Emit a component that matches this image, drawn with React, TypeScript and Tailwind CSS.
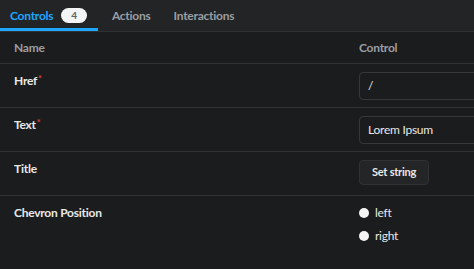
export default function App() {
  const rows = [
    { name: "Href", required: true, kind: "input", value: "/" },
    { name: "Text", required: true, kind: "input", value: "Lorem Ipsum" },
    { name: "Title", required: false, kind: "button" },
    { name: "Chevron Position", required: false, kind: "radio" },
  ];

  return (
    <div className="h-[269px] w-[474px] overflow-hidden bg-[#1b1c1d] font-['Lato',sans-serif] tracking-[-0.25px] text-[#e8e8e8]">
      {/* tabs */}
      <div className="flex h-[32px] items-stretch border-b border-[#2f3133] bg-[#222425]">
        <div className="relative flex items-center gap-[8px] pl-[10px] pr-[12px] text-[12px] font-bold text-[#1ea7fd]">
          Controls
          <span className="rounded-full bg-[#f3f4f5] px-[10px] py-[1px] text-[10px] font-bold leading-[13px] text-[#5f6366]">
            4
          </span>
          <span className="absolute bottom-[0px] left-0 h-[3px] w-[98px] bg-[#1ea7fd]" />
        </div>
        <div className="flex items-center px-[13px] text-[12px] font-bold text-[#9a9ea3]">Actions</div>
        <div className="flex items-center px-[10px] text-[12px] font-bold text-[#9a9ea3]">Interactions</div>
      </div>

      {/* header */}
      <div className="grid h-[32px] grid-cols-[345px_1fr] items-center border-b border-[#2f3133] text-[12px] font-bold text-[#9a9ea3]">
        <div className="pl-[14px]">Name</div>
        <div className="pl-[14px]">Control</div>
      </div>

      {rows.map((r) => (
        <div
          key={r.name}
          className="grid min-h-[44px] grid-cols-[345px_1fr] border-b border-[#2f3133]"
        >
          <div className="pl-[14px] pt-[8px] text-[12px] font-bold text-[#e8e8e8]">
            {r.name}
            {r.required && <span className="ml-[1px] align-top text-[9px] text-[#e0413e]">*</span>}
          </div>
          <div className="pl-[14px] pt-[8px] pb-[7px]">
            {r.kind === "input" && (
              <div className="flex h-[28px] w-[140px] items-center rounded-[4px] border border-[#35373a] bg-[#1b1c1d] pl-[8px] text-[12px] text-[#e8e8e8]">
                {r.value}
              </div>
            )}
            {r.kind === "button" && (
              <div className="flex h-[25px] w-[70px] items-center justify-center rounded-[4px] border border-[#2f3133] bg-[#232527] text-[11px] font-bold text-[#e8e8e8]">
                Set string
              </div>
            )}
            {r.kind === "radio" && (
              <div className="flex flex-col gap-[7px] pt-[1px] pb-[20px]">
                {["left", "right"].map((o) => (
                  <label key={o} className="flex items-center gap-[6px] text-[12px] leading-[16px] text-[#e8e8e8]">
                    <span className="h-[10px] w-[10px] rounded-full bg-[#f5f5f5]" />
                    {o}
                  </label>
                ))}
              </div>
            )}
          </div>
        </div>
      ))}
    </div>
  );
}
